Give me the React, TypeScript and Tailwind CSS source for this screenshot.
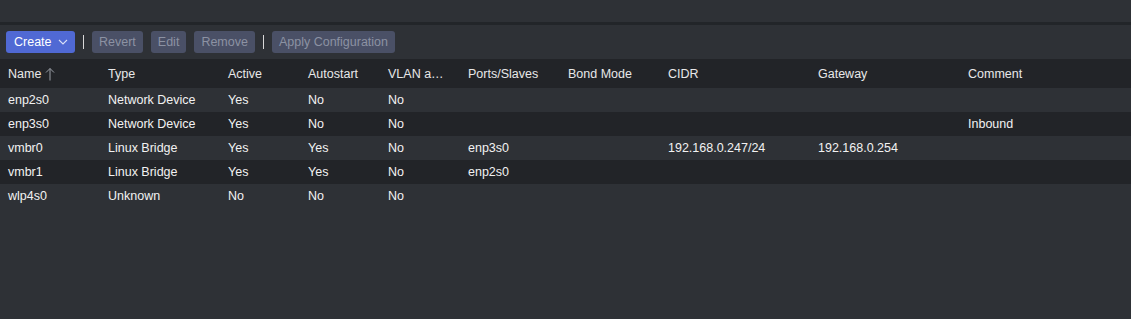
import React from "react";

const cols = [
  { key: "name", label: "Name", w: "w-[100px]" },
  { key: "type", label: "Type", w: "w-[120px]" },
  { key: "active", label: "Active", w: "w-[80px]" },
  { key: "auto", label: "Autostart", w: "w-[80px]" },
  { key: "vlan", label: "VLAN a…", w: "w-[80px]" },
  { key: "ports", label: "Ports/Slaves", w: "w-[100px]" },
  { key: "bond", label: "Bond Mode", w: "w-[100px]" },
  { key: "cidr", label: "CIDR", w: "w-[150px]" },
  { key: "gw", label: "Gateway", w: "w-[150px]" },
  { key: "comment", label: "Comment", w: "flex-1" },
];

const rows: Record<string, string>[] = [
  { name: "enp2s0", type: "Network Device", active: "Yes", auto: "No", vlan: "No", ports: "", bond: "", cidr: "", gw: "", comment: "" },
  { name: "enp3s0", type: "Network Device", active: "Yes", auto: "No", vlan: "No", ports: "", bond: "", cidr: "", gw: "", comment: "Inbound" },
  { name: "vmbr0", type: "Linux Bridge", active: "Yes", auto: "Yes", vlan: "No", ports: "enp3s0", bond: "", cidr: "192.168.0.247/24", gw: "192.168.0.254", comment: "" },
  { name: "vmbr1", type: "Linux Bridge", active: "Yes", auto: "Yes", vlan: "No", ports: "enp2s0", bond: "", cidr: "", gw: "", comment: "" },
  { name: "wlp4s0", type: "Unknown", active: "No", auto: "No", vlan: "No", ports: "", bond: "", cidr: "", gw: "", comment: "" },
];

function DisabledBtn({ label }: { label: string }) {
  return (
    <div className="h-[22px] px-[7px] rounded-[3px] bg-[#4a5066] text-[#8c92a3] flex items-center text-[12.5px]">
      {label}
    </div>
  );
}

function Sep() {
  return <div className="w-px h-[14px] bg-[#d8d8d8] mx-[8px]" />;
}

export default function App() {
  return (
    <div
      className="w-[1131px] h-[319px] bg-[#2e3136] text-[#f2f2f2] overflow-hidden flex flex-col"
      style={{ fontFamily: '"Liberation Sans", Arial, sans-serif' }}
    >
      <div className="h-[22px] shrink-0" />
      <div className="h-[3px] bg-[#222529] shrink-0" />
      <div className="h-[34px] shrink-0 flex items-center pl-[6px]">
        <div className="h-[22px] w-[69px] rounded-[3px] bg-[#5069d4] text-white flex items-center pl-[8px] text-[12.5px]">
          <span>Create</span>
          <svg className="ml-[6px]" width="10" height="6" viewBox="0 0 10 6">
            <path d="M1 1 L5 5 L9 1" fill="none" stroke="#d9dff7" strokeWidth="1.1" />
          </svg>
        </div>
        <Sep />
        <div className="flex gap-[8px]">
          <DisabledBtn label="Revert" />
          <DisabledBtn label="Edit" />
          <DisabledBtn label="Remove" />
        </div>
        <Sep />
        <DisabledBtn label="Apply Configuration" />
      </div>
      <div className="h-[29px] shrink-0 bg-[#222428] flex items-center pt-[1px] text-[12.5px] text-[#e8e8e8]">
        {cols.map((c) => (
          <div key={c.key} className={`${c.w} pl-[8px] flex items-center whitespace-nowrap`}>
            <span>{c.label}</span>
            {c.key === "name" && (
              <svg className="ml-[4px]" width="10" height="14" viewBox="0 0 10 14">
                <path d="M5 1.5 V13.5 M1 5.5 L5 1.5 L9 5.5" fill="none" stroke="#9a9ea6" strokeWidth="1" />
              </svg>
            )}
          </div>
        ))}
      </div>
      {rows.map((r, i) => (
        <div
          key={r.name}
          className={`h-[24px] shrink-0 flex items-center pt-[1px] text-[12.5px] ${i % 2 === 0 ? "bg-[#2e3136]" : "bg-[#222428]"}`}
        >
          {cols.map((c) => (
            <div key={c.key} className={`${c.w} pl-[8px] whitespace-nowrap`}>
              {r[c.key]}
            </div>
          ))}
        </div>
      ))}
    </div>
  );
}
